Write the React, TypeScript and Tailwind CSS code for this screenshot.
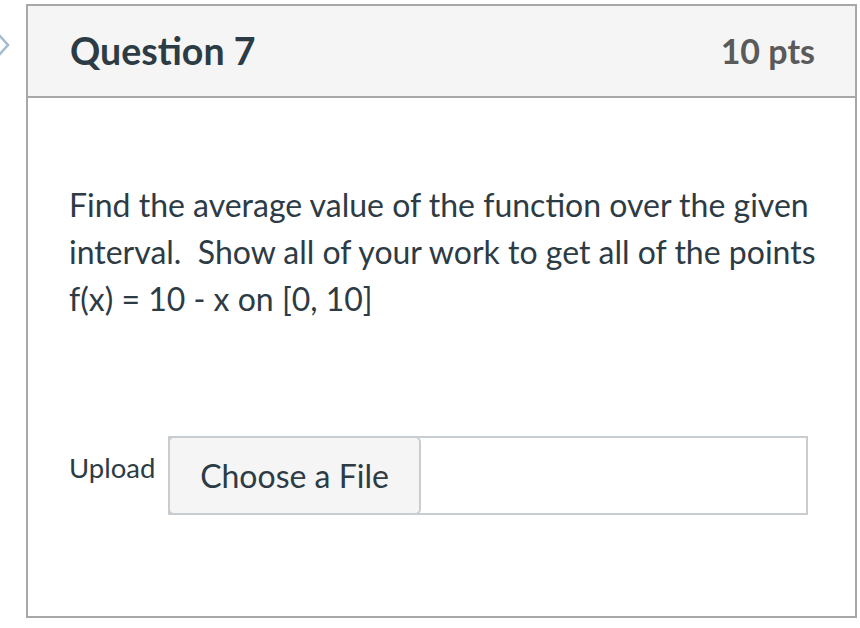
import React from "react";

export default function App() {
  return (
    <div
      className="relative w-[860px] h-[628px] bg-white overflow-hidden pt-[4px] pl-[26px]"
      style={{ fontFamily: "Lato, 'Open Sans', sans-serif" }}
    >
      <svg
        className="absolute left-[-16px] top-[30px]"
        width="28"
        height="30"
        viewBox="0 0 28 30"
      >
        <path
          d="M14 4 L24 15 L14 26 L4 15 Z"
          fill="none"
          stroke="#a3bccf"
          strokeWidth="2.5"
        />
      </svg>
      <div className="w-[831px] h-[614px] border-2 border-[#a8a8a8] flex flex-col">
        <div className="h-[90px] bg-[#f5f5f5] border-b-2 border-[#a8a8a8] box-content flex items-center justify-between pl-[42px] pr-[40px]">
          <h2 className="text-[37.5px] font-bold text-[#2d3b45] leading-none">
            Question 7
          </h2>
          <div className="text-[34px] font-bold text-[#5a5a5a] leading-none">
            10 pts
          </div>
        </div>
        <div className="pl-[41px] pr-[30px] pt-[83px]">
          <div className="text-[32px] leading-[47px] text-[#2d3b45] whitespace-nowrap">
            <p>Find the average value of the function over the given</p>
            <p>interval.&nbsp; Show all of your work to get all of the points</p>
            <p>f(x) = 10 - x on [0, 10]</p>
          </div>
          <div className="mt-[114px] flex items-start">
            <span className="text-[27.5px] text-[#2d3b45] leading-[32px] pt-[16px] w-[99px]">
              Upload
            </span>
            <div className="flex h-[79px] w-[640px] border-2 border-[#c7cdd1]">
              <button className="w-[249px] h-full -my-[2px] -ml-[2px] box-content border-2 border-[#c7cdd1] rounded-[6px] bg-[#f5f5f5] text-[32px] text-[#2d3b45] flex items-center justify-center">
                Choose a File
              </button>
            </div>
          </div>
        </div>
      </div>
    </div>
  );
}
